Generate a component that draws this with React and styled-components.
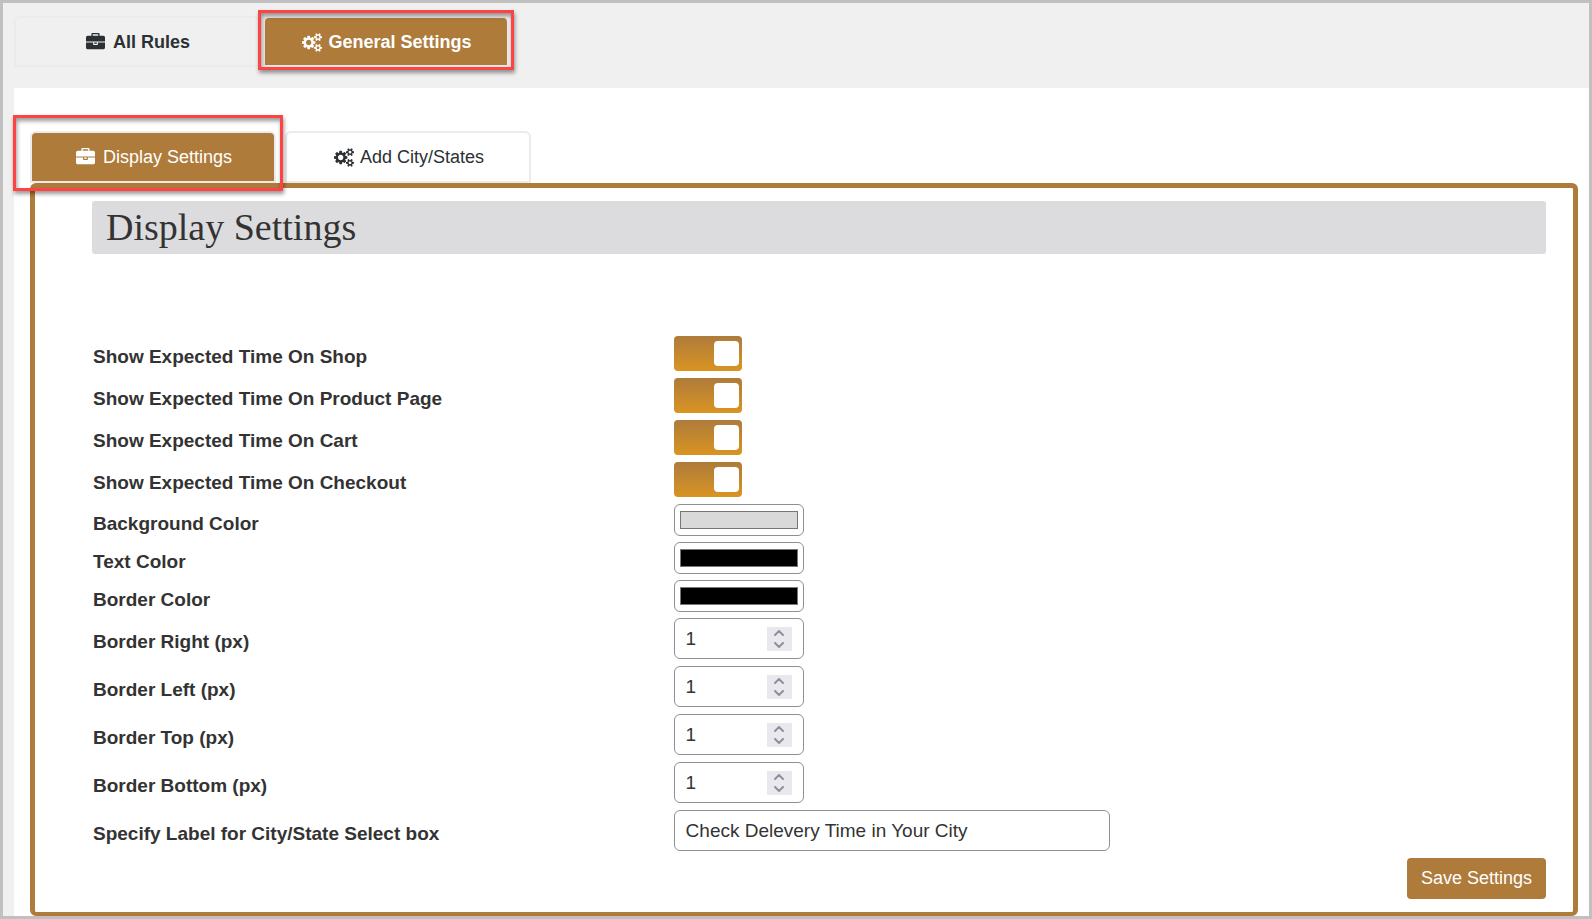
import React, { useState } from 'react';
import styled, { createGlobalStyle, css } from 'styled-components';

const GlobalStyle = createGlobalStyle`
    * {
        box-sizing: border-box;
    }
    body {
        margin: 0;
        background-color: #f0f0f0;
        color: #333;
        font-family: "Liberation Sans", Arial, sans-serif;
        font-size: 18px;
    }
    button, input {
        font-family: inherit;
        font-size: inherit;
        color: inherit;
    }
`

const Page = styled.div`
    display: flex;
    flex-direction: column;
    min-height: 100vh;
    border: 3px solid #c0c0c0;
    padding-left: 11px;
`
const TopTabs = styled.nav`
    display: flex;
    gap: 3px;
    padding: 13px 0 21px;
`
const SubTabs = styled.nav`
    display: flex;
    gap: 9px;
`
const TabSlot = styled.div`
    position: relative;
`
const Tab = styled.button`
    display: flex;
    align-items: center;
    justify-content: center;
    gap: ${props => props.$gap || 8}px;
    width: 246px;
    height: ${props => props.$bold ? 51 : 52}px;
    padding: ${props => props.$bold ? "1px 0 0 2px" : "0 0 0 2px"};
    border: 2px solid #ebebeb;
    border-radius: 6px 6px 0 0;
    background-color: ${props => props.$active ? "#ae7b3b" : "transparent"};
    color: ${props => props.$active ? "#fff" : "#2c3033"};
    font-weight: ${props => props.$bold ? 700 : 400};
    cursor: pointer;
`
const Highlight = styled.span`
    position: absolute;
    pointer-events: none;
    border: 3px solid #ff4343;
    box-shadow: 1px 3px 4px rgba(0,0,0,0.4), inset 1px 3px 4px rgba(0,0,0,0.4);
    inset: ${props => props.$inset};
`
const Content = styled.main`
    flex: 1;
    display: flex;
    flex-direction: column;
    padding: 43px 11px 0 16px;
    background-color: #fff;
`
const Panel = styled.form`
    flex: 1;
    padding: 13px 27px 13px 57px;
    border: 5px solid #ae7b3b;
    border-bottom-width: 4px;
    border-radius: 6px;
`
const Title = styled.h1`
    margin: 0 0 82px;
    padding: 0 14px;
    border-radius: 3px;
    background-color: #dcdcde;
    color: #333;
    font-family: "Liberation Serif", "Times New Roman", serif;
    font-size: 38px;
    font-weight: 400;
    line-height: 53px;
`
const Row = styled.div`
    display: grid;
    grid-template-columns: 2fr 3fr;
    align-items: start;
    height: ${props => props.$height}px;
`
const Label = styled.label`
    padding-left: 1px;
    font-size: 19px;
    font-weight: 700;
    line-height: ${props => props.$line}px;
`
const Switch = styled.input`
    appearance: none;
    display: flex;
    justify-content: flex-end;
    align-items: center;
    width: 68px;
    height: 35px;
    margin: 0;
    padding: 0 3px;
    border-radius: 4px;
    background: #ccc;
    cursor: pointer;
    &::before {
        content: "";
        width: 25px;
        height: 25px;
        border-radius: 4px;
        background-color: #fff;
    }
    &:checked {
        background: linear-gradient(#ae7b3b, #d99422);
    }
    &:not(:checked) {
        justify-content: flex-start;
    }
`
const fieldBorder = css`
    border: 1px solid #8c8f94;
    border-radius: 6px;
    background-color: #fff;
`
const ColorInput = styled.input`
    ${fieldBorder}
    appearance: none;
    width: 130px;
    height: 32px;
    padding: 6px 5px;
    &::-webkit-color-swatch-wrapper {
        padding: 0;
    }
    &::-webkit-color-swatch {
        border: 1px solid #777;
        border-radius: 0;
    }
`
const NumberBox = styled.div`
    ${fieldBorder}
    display: flex;
    align-items: center;
    width: 130px;
    height: 41px;
    padding: 0 11px;
`
const NumberInput = styled.input`
    appearance: textfield;
    flex: 1;
    min-width: 0;
    padding: 0;
    border: 0;
    outline: 0;
    background: none;
    font-size: 19px;
    &::-webkit-inner-spin-button {
        display: none;
    }
`
const Spinner = styled.div`
    display: flex;
    flex-direction: column;
    width: 25px;
    height: 24px;
    background-color: #e9e9ed;
`
const SpinButton = styled.button`
    flex: 1;
    display: flex;
    align-items: center;
    justify-content: center;
    padding: 0;
    border: 0;
    background: none;
    color: #8f8f9d;
`
const TextInput = styled.input`
    ${fieldBorder}
    width: 100%;
    max-width: 436px;
    height: 41px;
    padding: 0 11px;
    font-size: 19px;
`
const Actions = styled.div`
    display: flex;
    justify-content: flex-end;
`
const SaveButton = styled.button`
    height: 41px;
    padding: 0 14px;
    border: 0;
    border-radius: 4px;
    background-color: #ae7b3b;
    color: #fff;
    cursor: pointer;
`

const smallCog = "q0 16-149 31-12 27-30 52 51 113 51 138 0 4-4 7-122 71-124 71-8 0-46-47t-52-68q-20 2-30 2t-30-2q-14 21-52 68t-46 47q-2 0-124-71-4-3-4-7 0-25 51-138-18-25-30-52-149-15-149-31v-140q0-16 149-31 13-29 30-52-51-113-51-138 0-4 4-7 4-2 35-20t59-34 30-16q8 0 46 46.5t52 67.5q20-2 30-2t30 2q51-71 92-112l6-2q4 0 124 70 4 3 4 7 0 25-51 138 17 23 30 52 149 15 149 31z"

const BriefcaseIcon = () => (
    <svg width="19" height="19" viewBox="0 0 1792 1792" fill="currentColor" aria-hidden="true">
        <path d="M640 256h512v-128h-512v128zm1152 640v480q0 66-47 113t-113 47h-1472q-66 0-113-47t-47-113v-480h672v160q0 26 19 45t45 19h320q26 0 45-19t19-45v-160h672zm-768 0v128h-256v-128h256zm768-480v384h-1792v-384q0-66 47-113t113-47h352v-160q0-40 28-68t68-28h576q40 0 68 28t28 68v160h352q66 0 113 47t47 113z" />
    </svg>
)

const CogsIcon = () => (
    <svg width="20" height="19" viewBox="-64 0 1920 1792" fill="currentColor" aria-hidden="true">
        <path fillRule="evenodd" d="M832 896q0-106-75-181t-181-75-181 75-75 181 75 181 181 75 181-75 75-181zM1216 805v185q0 10-7 19.5t-16 10.5l-155 24q-11 35-32 76 34 48 90 115 7 11 7 20 0 12-7 19-23 30-82.5 89.5t-78.5 59.5q-11 0-21-7l-115-90q-37 19-77 31-11 108-23 155-7 24-30 24h-186q-11 0-20-7.5t-10-17.5l-23-153q-34-10-75-31l-118 89q-7 7-20 7-11 0-21-8-144-133-144-160 0-9 7-19 10-14 41-53t47-61q-23-44-35-82l-152-24q-10-1-17-9.5t-7-19.5v-185q0-10 7-19.5t16-10.5l155-24q11-35 32-76-34-48-90-115-7-11-7-20 0-12 7-20 22-30 82-89t79-59q11 0 21 7l115 90q34-18 77-32 11-108 23-154 7-24 30-24h186q11 0 20 7.5t10 17.5l23 153q34 10 75 31l118-89q8-7 20-7 11 0 21 8 144 133 144 160 0 8-7 19-12 16-42 54t-45 60q23 48 34 82l152 23q10 2 17 10.5t7 19.5z" />
        <path fillRule="evenodd" d={`M1856 1338v140${smallCog}M1610 1408a138 138 0 1 0-276 0a138 138 0 1 0 276 0z`} />
        <path fillRule="evenodd" d={`M1856 314v140${smallCog}M1610 384a138 138 0 1 0-276 0a138 138 0 1 0 276 0z`} />
    </svg>
)

const Chevron = ({ down }) => (
    <svg width="10" height="6" viewBox="0 0 10 6" fill="none" stroke="currentColor" strokeWidth="2" strokeLinecap="round" aria-hidden="true">
        <path d={down ? "M1 1L5 5L9 1" : "M1 5L5 1L9 5"} />
    </svg>
)

const switches = [
    { id: "shop", label: "Show Expected Time On Shop" },
    { id: "product", label: "Show Expected Time On Product Page" },
    { id: "cart", label: "Show Expected Time On Cart" },
    { id: "checkout", label: "Show Expected Time On Checkout" },
]
const colors = [
    { id: "background", label: "Background Color", value: "#d9d9d9" },
    { id: "text", label: "Text Color", value: "#000000" },
    { id: "border", label: "Border Color", value: "#000000" },
]
const borders = [
    { id: "right", label: "Border Right (px)" },
    { id: "left", label: "Border Left (px)" },
    { id: "top", label: "Border Top (px)" },
    { id: "bottom", label: "Border Bottom (px)" },
]

const NumberField = ({ id }) => {
    const [value, setValue] = useState(1);
    return (
        <NumberBox>
            <NumberInput id={id} type="number" value={value} onChange={e => setValue(Number(e.target.value))} />
            <Spinner>
                <SpinButton type="button" aria-label="Increase" onClick={() => setValue(value + 1)}><Chevron /></SpinButton>
                <SpinButton type="button" aria-label="Decrease" onClick={() => setValue(value - 1)}><Chevron down /></SpinButton>
            </Spinner>
        </NumberBox>
    );
};

const App = () => {
    return (
        <Page>
            <GlobalStyle />
            <TopTabs>
                <Tab $bold type="button"><BriefcaseIcon /> All Rules</Tab>
                <TabSlot>
                    <Tab $bold $active $gap={6} type="button"><CogsIcon /> General Settings</Tab>
                    <Highlight $inset="-6px -5px -3px -5px" />
                </TabSlot>
            </TopTabs>
            <Content>
                <SubTabs>
                    <TabSlot>
                        <Tab $active type="button"><BriefcaseIcon /> Display Settings</Tab>
                        <Highlight $inset="-16px -7px -8px -17px" />
                    </TabSlot>
                    <Tab $gap={6} type="button"><CogsIcon /> Add City/States</Tab>
                </SubTabs>
                <Panel onSubmit={e => e.preventDefault()}>
                    <Title>Display Settings</Title>
                    {switches.map(item => (
                        <Row key={item.id} $height={42}>
                            <Label htmlFor={item.id} $line={42}>{item.label}</Label>
                            <Switch id={item.id} type="checkbox" defaultChecked />
                        </Row>
                    ))}
                    {colors.map(item => (
                        <Row key={item.id} $height={38}>
                            <Label htmlFor={item.id} $line={40}>{item.label}</Label>
                            <ColorInput id={item.id} type="color" defaultValue={item.value} />
                        </Row>
                    ))}
                    {borders.map(item => (
                        <Row key={item.id} $height={48}>
                            <Label htmlFor={item.id} $line={48}>{item.label}</Label>
                            <NumberField id={item.id} />
                        </Row>
                    ))}
                    <Row $height={48}>
                        <Label htmlFor="city-label" $line={48}>Specify Label for City/State Select box</Label>
                        <TextInput id="city-label" type="text" defaultValue="Check Delevery Time in Your City" />
                    </Row>
                    <Actions>
                        <SaveButton type="submit">Save Settings</SaveButton>
                    </Actions>
                </Panel>
            </Content>
        </Page>
    );
};

export default App
